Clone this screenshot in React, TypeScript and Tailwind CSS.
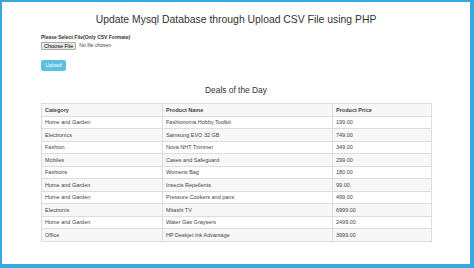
const DEALS = [
  ["Home and Garden", "Fashionoma Hobby Toolkit", "199.00"],
  ["Electronics", "Samsung EVO 32 GB", "749.00"],
  ["Fashion", "Nova NHT Trimmer", "349.00"],
  ["Mobiles", "Cases and Safeguard", "299.00"],
  ["Fashions", "Womens Bag", "180.00"],
  ["Home and Garden", "Insects Repellents", "99.00"],
  ["Home and Garden", "Pressure Cookers and pans", "499.00"],
  ["Electronis", "Mitashi TV", "6999.00"],
  ["Home and Garden", "Water Gas Graysers", "2499.00"],
  ["Office", "HP Deskjet Ink Advantage", "3999.00"],
];

export default function App() {
  return (
    <div
      className="w-[474px] h-[268px] bg-white border-[#38a9df] border-t-2 border-l-2 border-r-[4px] border-b-[4px] overflow-hidden text-[#333]"
      style={{ fontFamily: '"Liberation Sans", Arial, sans-serif' }}
    >
      <h1 className="text-center text-[10.4px] font-light mt-[11px] leading-[14px]">
        Update Mysql Database through Upload CSV File using PHP
      </h1>

      <form className="ml-[39px] mt-[7px]">
        <label className="block text-[5px] font-bold leading-[7px]">
          Please Select File(Only CSV Formate)
        </label>
        <div className="flex items-center gap-[3px] mt-[1px]">
          <span className="px-[2px] h-[8px] leading-[7px] text-[5.5px] text-black bg-[#e9e9e9] border border-[#aaa] rounded-[1px]">
            Choose File
          </span>
          <span className="text-[5px] text-[#444]">No file chosen</span>
        </div>
        <button
          type="button"
          className="mt-[9px] w-[25px] h-[11px] rounded-[2px] bg-[#5bc0de] text-white text-[5px] leading-[11px]"
        >
          Upload
        </button>
      </form>

      <h2 className="text-center text-[8.4px] mt-[11px] leading-[11px] text-[#333]">
        Deals of the Day
      </h2>

      <table className="ml-[39px] mt-[7px] w-[391px] border-collapse border border-[#ddd] text-[5.5px] text-[#444]">
        <tbody>
          <tr className="bg-[#f7f7f7] font-bold">
            <td className="w-[121px] h-[12.5px] px-[3px] border border-[#ddd]">Category</td>
            <td className="w-[170px] px-[3px] border border-[#ddd]">Product Name</td>
            <td className="px-[3px] border border-[#ddd]">Product Price</td>
          </tr>
          {DEALS.map((d, i) => (
            <tr key={i} className={i % 2 === 1 ? "bg-[#f7f7f7]" : "bg-white"}>
              <td className="h-[12.5px] px-[3px] border border-[#ddd]">{d[0]}</td>
              <td className="px-[3px] border border-[#ddd]">{d[1]}</td>
              <td className="px-[3px] border border-[#ddd]">{d[2]}</td>
            </tr>
          ))}
        </tbody>
      </table>
    </div>
  );
}
